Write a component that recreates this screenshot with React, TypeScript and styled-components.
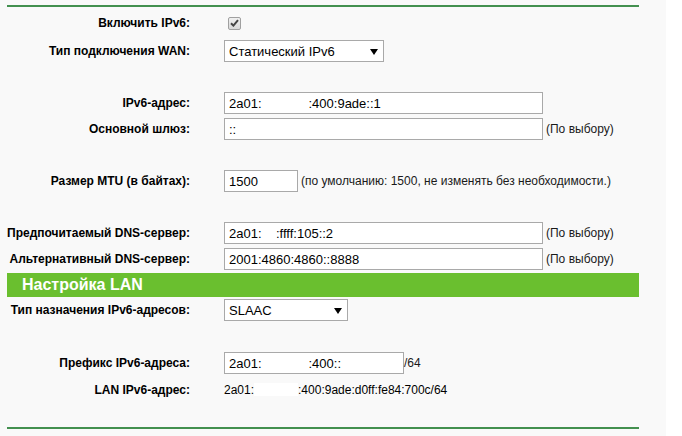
import React from 'react'
import styled, { createGlobalStyle } from 'styled-components'

const GlobalStyle = createGlobalStyle`
  html, body {
    margin: 0;
    padding: 0;
    background: #ffffff;
  }
  body {
    font-family: "Liberation Sans", Arial, sans-serif;
    color: #000;
  }
`

const Panel = styled.div`
  width: 666px;
  height: 436px;
  background: #f9f9f9;
  padding-top: 5px;
  box-sizing: border-box;
  overflow: hidden;
`

const Rule = styled.div<{ $top?: number }>`
  margin: ${({ $top }) => $top ?? 0}px 0 0 7px;
  width: 632px;
  height: 2px;
  background: #43904f;
`

const Row = styled.div<{ $h: number }>`
  display: grid;
  grid-template-columns: 183px 1fr;
  column-gap: 34px;
  align-items: center;
  height: ${({ $h }) => $h}px;
  padding-left: 7px;
`

const Spacer = styled.div<{ $h: number }>`
  height: ${({ $h }) => $h}px;
`

const Label = styled.label`
  font-size: 12px;
  font-weight: bold;
  text-align: right;
  white-space: nowrap;
  direction: rtl;
  unicode-bidi: plaintext;
`

const Field = styled.div`
  display: flex;
  align-items: center;
  gap: 3px;
  font-size: 12px;
  white-space: nowrap;
`

const TextInput = styled.input<{ $w: number }>`
  box-sizing: border-box;
  width: ${({ $w }) => $w}px;
  height: 22px;
  margin: 0;
  padding: 0 4px;
  border: 1px solid #a9a9a9;
  border-radius: 0;
  background: #fff;
  font-family: "Liberation Sans", Arial, sans-serif;
  font-size: 13px;
  color: #000;
  outline: none;
`

const SelectBox = styled.div<{ $w: number }>`
  position: relative;
  width: ${({ $w }) => $w}px;
  height: 22px;
`

const Select = styled.select`
  appearance: none;
  box-sizing: border-box;
  width: 100%;
  height: 100%;
  margin: 0;
  padding: 0 4px;
  border: 1px solid #a9a9a9;
  border-radius: 0;
  background: #fff;
  font-family: "Liberation Sans", Arial, sans-serif;
  font-size: 13px;
  color: #000;
  outline: none;
`

const Arrow = styled.svg`
  position: absolute;
  right: 6px;
  top: 9px;
  pointer-events: none;
`

const Check = styled.span`
  display: inline-flex;
  align-items: center;
  justify-content: center;
  box-sizing: border-box;
  width: 13px;
  height: 13px;
  margin-left: 4px;
  border: 1px solid #a0a0a0;
  border-radius: 2px;
  background: linear-gradient(#f0f0f0, #d8d8d8);
`

const Hint = styled.span`
  font-size: 12px;
  color: #1a1a1a;
`

const Value = styled.span`
  font-size: 12px;
`

const Redacted = styled.span<{ $w: number }>`
  display: inline-block;
  width: ${({ $w }) => $w}px;
  height: 13px;
  vertical-align: -2px;
  background: #fff;
`

const SectionBar = styled.div`
  margin: 1px 0 0 7px;
  width: 632px;
  height: 24px;
  box-sizing: border-box;
  padding-left: 15px;
  background: #6abf2f;
  color: #fff;
  font-size: 16px;
  font-weight: bold;
  line-height: 24px;
`

const Dropdown = ({ w, value }: { w: number; value: string }) => (
  <SelectBox $w={w}>
    <Select defaultValue={value}>
      <option>{value}</option>
    </Select>
    <Arrow width="8" height="6" viewBox="0 0 8 6">
      <path d="M0 0h8L4 6z" fill="#000" />
    </Arrow>
  </SelectBox>
)

const App = () => {
  return (
    <>
      <GlobalStyle />
      <Panel>
        <Rule />
        <Row $h={32}>
          <Label>Включить IPv6:</Label>
          <Field>
            <Check>
              <svg width="9" height="8" viewBox="0 0 9 8">
                <path d="M1 4.2 3.4 6.6 8 1.2" fill="none" stroke="#444" strokeWidth="2" />
              </svg>
            </Check>
          </Field>
        </Row>
        <Row $h={24}>
          <Label>Тип подключения WAN:</Label>
          <Field>
            <Dropdown w={160} value="Статический IPv6" />
          </Field>
        </Row>
        <Spacer $h={27} />
        <Row $h={26}>
          <Label>IPv6-адрес:</Label>
          <Field>
            <TextInput $w={319} defaultValue="2a01:             :400:9ade::1" />
          </Field>
        </Row>
        <Row $h={26}>
          <Label>Основной шлюз:</Label>
          <Field>
            <TextInput $w={319} defaultValue="::" />
            <Hint>(По выбору)</Hint>
          </Field>
        </Row>
        <Spacer $h={26} />
        <Row $h={26}>
          <Label>Размер MTU (в байтах):</Label>
          <Field>
            <TextInput $w={74} defaultValue="1500" />
            <Hint>(по умолчанию: 1500, не изменять без необходимости.)</Hint>
          </Field>
        </Row>
        <Spacer $h={26} />
        <Row $h={26}>
          <Label>Предпочитаемый DNS-сервер:</Label>
          <Field>
            <TextInput $w={319} defaultValue="2a01:    :ffff:105::2" />
            <Hint>(По выбору)</Hint>
          </Field>
        </Row>
        <Row $h={26}>
          <Label>Альтернативный DNS-сервер:</Label>
          <Field>
            <TextInput $w={319} defaultValue="2001:4860:4860::8888" />
            <Hint>(По выбору)</Hint>
          </Field>
        </Row>
        <SectionBar>Настройка LAN</SectionBar>
        <Row $h={26}>
          <Label>Тип назначения IPv6-адресов:</Label>
          <Field>
            <Dropdown w={124} value="SLAAC" />
          </Field>
        </Row>
        <Spacer $h={27} />
        <Row $h={26}>
          <Label>Префикс IPv6-адреса:</Label>
          <Field>
            <TextInput $w={180} defaultValue="2a01:             :400::" />
            <Hint style={{ marginLeft: -3 }}>/64</Hint>
          </Field>
        </Row>
        <Row $h={27}>
          <Label>LAN IPv6-адрес:</Label>
          <Field>
            <Value>
              2a01:<Redacted $w={44} />:400:9ade:d0ff:fe84:700c/64
            </Value>
          </Field>
        </Row>
        <Rule $top={24} />
      </Panel>
    </>
  )
}

export default App
